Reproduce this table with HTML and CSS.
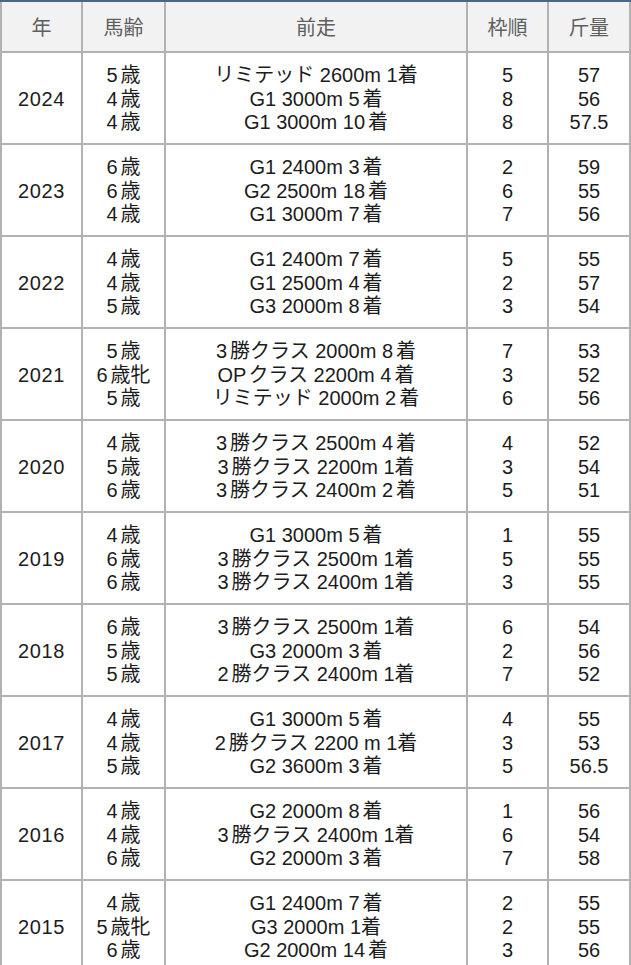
FILE: index.html
```html
<!DOCTYPE html>
<html lang="ja">
<head>
<meta charset="utf-8">
<link rel="stylesheet" href="styles.css">
</head>
<body>
<div class="table">
  <div class="th">年</div><div class="th">馬齢</div><div class="th">前走</div><div class="th">枠順</div><div class="th">斤量</div>

  <div class="td yr">2024</div>
  <div class="td"><span><i>5</i>歳</span><span><i>4</i>歳</span><span><i>4</i>歳</span></div>
  <div class="td"><span>リミテッド 2600m 1着</span><span>G1 3000m <i>5</i>着</span><span>G1 3000m <i>10</i>着</span></div>
  <div class="td"><span>5</span><span>8</span><span>8</span></div>
  <div class="td"><span>57</span><span>56</span><span>57.5</span></div>

  <div class="td yr">2023</div>
  <div class="td"><span><i>6</i>歳</span><span><i>6</i>歳</span><span><i>4</i>歳</span></div>
  <div class="td"><span>G1 2400m <i>3</i>着</span><span>G2 2500m <i>18</i>着</span><span>G1 3000m <i>7</i>着</span></div>
  <div class="td"><span>2</span><span>6</span><span>7</span></div>
  <div class="td"><span>59</span><span>55</span><span>56</span></div>

  <div class="td yr">2022</div>
  <div class="td"><span><i>4</i>歳</span><span><i>4</i>歳</span><span><i>5</i>歳</span></div>
  <div class="td"><span>G1 2400m <i>7</i>着</span><span>G1 2500m <i>4</i>着</span><span>G3 2000m <i>8</i>着</span></div>
  <div class="td"><span>5</span><span>2</span><span>3</span></div>
  <div class="td"><span>55</span><span>57</span><span>54</span></div>

  <div class="td yr">2021</div>
  <div class="td"><span><i>5</i>歳</span><span><i>6</i>歳牝</span><span><i>5</i>歳</span></div>
  <div class="td"><span><i>3</i>勝クラス 2000m <i>8</i>着</span><span><i class="s">OP</i>クラス 2200m <i>4</i>着</span><span>リミテッド 2000m <i>2</i>着</span></div>
  <div class="td"><span>7</span><span>3</span><span>6</span></div>
  <div class="td"><span>53</span><span>52</span><span>56</span></div>

  <div class="td yr">2020</div>
  <div class="td"><span><i>4</i>歳</span><span><i>5</i>歳</span><span><i>6</i>歳</span></div>
  <div class="td"><span><i>3</i>勝クラス 2500m <i>4</i>着</span><span><i>3</i>勝クラス 2200m 1着</span><span><i>3</i>勝クラス 2400m <i>2</i>着</span></div>
  <div class="td"><span>4</span><span>3</span><span>5</span></div>
  <div class="td"><span>52</span><span>54</span><span>51</span></div>

  <div class="td yr">2019</div>
  <div class="td"><span><i>4</i>歳</span><span><i>6</i>歳</span><span><i>6</i>歳</span></div>
  <div class="td"><span>G1 3000m <i>5</i>着</span><span><i>3</i>勝クラス 2500m 1着</span><span><i>3</i>勝クラス 2400m 1着</span></div>
  <div class="td"><span>1</span><span>5</span><span>3</span></div>
  <div class="td"><span>55</span><span>55</span><span>55</span></div>

  <div class="td yr">2018</div>
  <div class="td"><span><i>6</i>歳</span><span><i>5</i>歳</span><span><i>5</i>歳</span></div>
  <div class="td"><span><i>3</i>勝クラス 2500m 1着</span><span>G3 2000m <i>3</i>着</span><span><i>2</i>勝クラス 2400m 1着</span></div>
  <div class="td"><span>6</span><span>2</span><span>7</span></div>
  <div class="td"><span>54</span><span>56</span><span>52</span></div>

  <div class="td yr">2017</div>
  <div class="td"><span><i>4</i>歳</span><span><i>4</i>歳</span><span><i>5</i>歳</span></div>
  <div class="td"><span>G1 3000m <i>5</i>着</span><span><i>2</i>勝クラス 2200 m 1着</span><span>G2 3600m <i>3</i>着</span></div>
  <div class="td"><span>4</span><span>3</span><span>5</span></div>
  <div class="td"><span>55</span><span>53</span><span>56.5</span></div>

  <div class="td yr">2016</div>
  <div class="td"><span><i>4</i>歳</span><span><i>4</i>歳</span><span><i>6</i>歳</span></div>
  <div class="td"><span>G2 2000m <i>8</i>着</span><span><i>3</i>勝クラス 2400m 1着</span><span>G2 2000m <i>3</i>着</span></div>
  <div class="td"><span>1</span><span>6</span><span>7</span></div>
  <div class="td"><span>56</span><span>54</span><span>58</span></div>

  <div class="td yr">2015</div>
  <div class="td"><span><i>4</i>歳</span><span><i>5</i>歳牝</span><span><i>6</i>歳</span></div>
  <div class="td"><span>G1 2400m <i>7</i>着</span><span>G3 2000m 1着</span><span>G2 2000m <i>14</i>着</span></div>
  <div class="td"><span>2</span><span>2</span><span>3</span></div>
  <div class="td"><span>55</span><span>55</span><span>56</span></div>
</div>
</body>
</html>
```
FILE: styles.css
```css
html, body {
  margin: 0;
  padding: 0;
  background: #ffffff;
}
body {
  font-family: "Liberation Sans", "Noto Sans CJK JP", sans-serif;
  color: #1c1c1c;
}
.table {
  width: 631px;
  box-sizing: border-box;
  display: grid;
  grid-template-columns: 79px 81px 300px 79px 80px;
  grid-auto-rows: 90px;
  grid-template-rows: 49px;
  gap: 2px;
  padding: 0 2px 2px 2px;
  border-top: 2px solid #4d6689;
  background: #b2b2b2;
}
.th {
  background: #f2f2f2;
  color: #5f5f5f;
  font-size: 20px;
  display: flex;
  align-items: center;
  justify-content: center;
}
.td {
  background: #ffffff;
  font-size: 20px;
  line-height: 23.5px;
  padding-top: 3px;
  display: flex;
  flex-direction: column;
  align-items: center;
  justify-content: center;
  text-align: center;
}
.td.yr {
  letter-spacing: 0.6px;
}
.td span {
  display: block;
  white-space: nowrap;
}
.td i {
  font-style: normal;
  margin-right: 3px;
}
.td i.s {
  margin-right: 2px;
}
```
